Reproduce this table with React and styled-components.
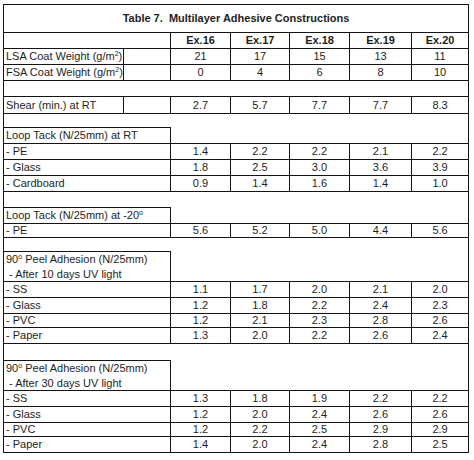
import React from "react";
import styled, { createGlobalStyle } from "styled-components";

const GlobalStyle = createGlobalStyle`
  html, body {
    margin: 0;
    padding: 0;
    background: #ffffff;
  }
  body {
    font-family: "Liberation Sans", Arial, sans-serif;
    color: #1e1e1e;
  }
`;

const LINE = "1px solid #141414";

const Page = styled.div`
  padding: 4px 0 0 3px;
`;

const Table = styled.table`
  border-collapse: collapse;
  table-layout: fixed;
  width: 465px;
  font-size: 11px;
  line-height: 11px;
`;

const Row = styled.tr`
  height: ${(p) => p.$h}px;
`;

const Cell = styled.td`
  padding: 0;
  border: ${LINE};
  vertical-align: middle;
  white-space: nowrap;
  overflow: hidden;
`;

const TitleCell = styled(Cell)`
  text-align: center;
  font-weight: bold;
`;

const HeadCell = styled(Cell)`
  text-align: center;
  font-weight: bold;
`;

const LabelCell = styled(Cell)`
  text-align: left;
  padding-left: 2px;
  ${(p) => p.$noTop && "border-top: none;"}
  ${(p) => p.$noBottom && "border-bottom: none;"}
`;

const ValueCell = styled(Cell)`
  text-align: center;
`;

const GapCell = styled(Cell)`
  border-top: ${(p) => (p.$top ? LINE : "none")};
  border-bottom: ${(p) => (p.$bottom ? LINE : "none")};
  border-left: ${(p) => (p.$left ? LINE : "none")};
  border-right: ${(p) => (p.$right ? LINE : "none")};
`;

const Sup = styled.sup`
  font-size: 7px;
  line-height: 0;
  vertical-align: 4px;
`;

const columns = [120, 47, 60, 59, 60, 62, 57];
const examples = ["Ex.16", "Ex.17", "Ex.18", "Ex.19", "Ex.20"];

const loopRT = [
  { label: "- PE", values: ["1.4", "2.2", "2.2", "2.1", "2.2"], h: 16 },
  { label: "- Glass", values: ["1.8", "2.5", "3.0", "3.6", "3.9"], h: 16 },
  { label: "- Cardboard", values: ["0.9", "1.4", "1.6", "1.4", "1.0"], h: 16 },
];

const peel10 = [
  { label: "- SS", values: ["1.1", "1.7", "2.0", "2.1", "2.0"], h: 16 },
  { label: "- Glass", values: ["1.2", "1.8", "2.2", "2.4", "2.3"], h: 16 },
  { label: "- PVC", values: ["1.2", "2.1", "2.3", "2.8", "2.6"], h: 14 },
  { label: "- Paper", values: ["1.3", "2.0", "2.2", "2.6", "2.4"], h: 16 },
];

const peel30 = [
  { label: "- SS", values: ["1.3", "1.8", "1.9", "2.2", "2.2"], h: 16 },
  { label: "- Glass", values: ["1.2", "2.0", "2.4", "2.6", "2.6"], h: 16 },
  { label: "- PVC", values: ["1.2", "2.2", "2.5", "2.9", "2.9"], h: 14 },
  { label: "- Paper", values: ["1.4", "2.0", "2.4", "2.8", "2.5"], h: 16 },
];

function Values({ values }) {
  return values.map((v, i) => <ValueCell key={i}>{v}</ValueCell>);
}

function DataRows({ rows }) {
  return rows.map((r) => (
    <Row $h={r.h} key={r.label}>
      <LabelCell colSpan={2}>{r.label}</LabelCell>
      <Values values={r.values} />
    </Row>
  ));
}

function PeelSection({ days, rows, gapH }) {
  return (
    <>
      <Row $h={gapH}>
        <GapCell colSpan={2} $left />
        <GapCell colSpan={5} rowSpan={3} $top $bottom $right />
      </Row>
      <Row $h={16}>
        <LabelCell colSpan={2} $noBottom>
          90<Sup>o</Sup> Peel Adhesion (N/25mm)
        </LabelCell>
      </Row>
      <Row $h={14}>
        <LabelCell colSpan={2} $noTop>
          &nbsp;- After {days} days UV light
        </LabelCell>
      </Row>
      <DataRows rows={rows} />
    </>
  );
}

export default function App() {
  return (
    <>
      <GlobalStyle />
      <Page>
        <Table>
          <colgroup>
            {columns.map((w, i) => (
              <col key={i} style={{ width: w }} />
            ))}
          </colgroup>
          <tbody>
            <Row $h={28}>
              <TitleCell colSpan={7}>
                Table 7.&nbsp; Multilayer Adhesive Constructions
              </TitleCell>
            </Row>
            <Row $h={16}>
              <Cell colSpan={2} />
              {examples.map((e) => (
                <HeadCell key={e}>{e}</HeadCell>
              ))}
            </Row>
            <Row $h={16}>
              <LabelCell>
                LSA Coat Weight (g/m<Sup>2</Sup>)
              </LabelCell>
              <Cell />
              <Values values={["21", "17", "15", "13", "11"]} />
            </Row>
            <Row $h={16}>
              <LabelCell>
                FSA Coat Weight (g/m<Sup>2</Sup>)
              </LabelCell>
              <Cell />
              <Values values={["0", "4", "6", "8", "10"]} />
            </Row>
            <Row $h={16}>
              <GapCell colSpan={7} $top $bottom $left $right />
            </Row>
            <Row $h={17}>
              <LabelCell>Shear (min.) at RT</LabelCell>
              <Cell />
              <Values values={["2.7", "5.7", "7.7", "7.7", "8.3"]} />
            </Row>

            <Row $h={14}>
              <GapCell colSpan={2} $left />
              <GapCell colSpan={5} rowSpan={2} $top $bottom $right />
            </Row>
            <Row $h={16}>
              <LabelCell colSpan={2}>Loop Tack (N/25mm) at RT</LabelCell>
            </Row>
            <DataRows rows={loopRT} />

            <Row $h={16}>
              <GapCell colSpan={2} $left />
              <GapCell colSpan={5} rowSpan={2} $top $bottom $right />
            </Row>
            <Row $h={16}>
              <LabelCell colSpan={2}>
                Loop Tack (N/25mm) at -20<Sup>o</Sup>
              </LabelCell>
            </Row>
            <Row $h={14}>
              <LabelCell colSpan={2}>- PE</LabelCell>
              <Values values={["5.6", "5.2", "5.0", "4.4", "5.6"]} />
            </Row>

            <PeelSection days={10} rows={peel10} gapH={14} />
            <PeelSection days={30} rows={peel30} gapH={17} />
          </tbody>
        </Table>
      </Page>
    </>
  );
}
